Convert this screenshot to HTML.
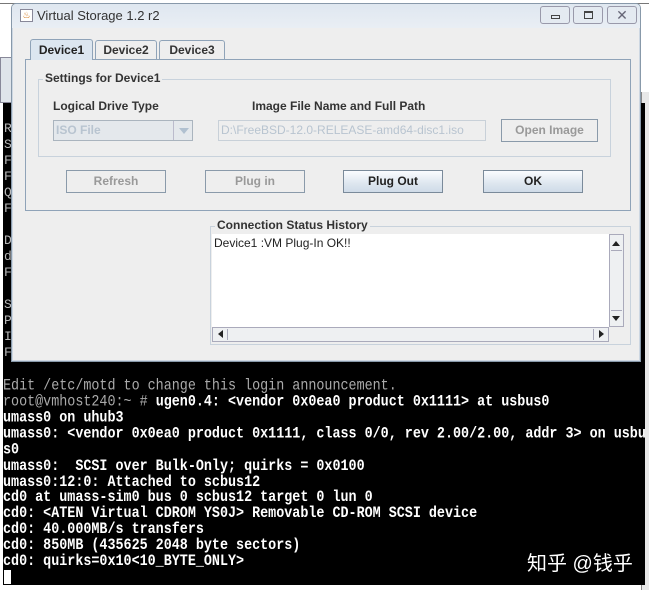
<!DOCTYPE html>
<html><head><meta charset="utf-8"><style>
*{margin:0;padding:0;box-sizing:border-box}
body{width:649px;height:590px;position:relative;overflow:hidden;background:#fff;font-family:"Liberation Sans",Arial,sans-serif;font-size:12px}
.a{position:absolute}
.term{background:#000;left:3px;top:103px;width:642px;height:482px}
.tl{position:absolute;left:3px;font-family:"Liberation Mono",monospace;font-size:13.4px;color:#fff;white-space:pre;line-height:16px;font-weight:bold;transform:scaleY(1.15);transform-origin:0 0}
.g{color:#aaa;font-weight:normal}
.lc{position:absolute;left:4px;font-family:"Liberation Mono",monospace;font-size:13px;color:#bbb;line-height:16px}
.btn{position:absolute;border:1px solid #8a9aaa;background:#eee;color:#999;font-weight:bold;text-align:center;line-height:21px;font-size:12px}
.act{background:linear-gradient(#fafcff,#dde6ef 60%,#cfdbe8);color:#222;border-color:#7a8a9a}
.grp{position:absolute;border:1px solid #c8d2dc}
.gt{position:absolute;background:#eeeeee;padding:0 2px;font-weight:bold;color:#333;font-size:12px}
</style></head><body>
<div class="a" style="left:0;top:0;width:649px;height:4px;background:#fff;border-bottom:1px solid #777"></div>
<div class="a" style="left:0;top:57px;width:14px;height:46px;background:#dfe4ea;border:1px solid #889"></div>
<div class="a" style="left:641px;top:92px;width:8px;height:498px;background:#e8e8e8;border-left:1px solid #888"></div>
<div class="a term"></div>
<div class="lc" style="top:121px">R<br>S<br>F<br>F<br>Q<br>F<br><br>D<br>d<br>F<br><br>S<br>P<br>I<br>F</div>
<div style="position:absolute;left:0;top:0;width:645px;height:590px;overflow:hidden">
<div class="tl g" style="top:378px">Edit /etc/motd to change this login announcement.</div>
<div class="tl" style="top:395px;line-height:13.9px"><span class="g">root@vmhost240:~ # </span>ugen0.4: &lt;vendor 0x0ea0 product 0x1111&gt; at usbus0
umass0 on uhub3
umass0: &lt;vendor 0x0ea0 product 0x1111, class 0/0, rev 2.00/2.00, addr 3&gt; on usbu
s0
umass0:  SCSI over Bulk-Only; quirks = 0x0100
umass0:12:0: Attached to scbus12
cd0 at umass-sim0 bus 0 scbus12 target 0 lun 0
cd0: &lt;ATEN Virtual CDROM YS0J&gt; Removable CD-ROM SCSI device
cd0: 40.000MB/s transfers
cd0: 850MB (435625 2048 byte sectors)
cd0: quirks=0x10&lt;10_BYTE_ONLY&gt;</div>
</div>
<div class="a" style="left:4px;top:570px;width:7px;height:14px;background:#fff"></div>
<div class="a" style="left:527px;top:547px;color:#fff;font-size:20px;font-family:'Liberation Sans','Noto Sans CJK SC',sans-serif">知乎 @钱乎</div>

<div class="a" style="left:11px;top:3px;width:630px;height:359px;background:#eeeeee;border:1px solid #8899aa;border-radius:5px 5px 0 0;box-shadow:0 0 0 1px #cdd7e2 inset"></div>
<div class="a" style="left:12px;top:4px;width:628px;height:24px;background:linear-gradient(#dfe7f0,#e9eef4);border-radius:4px 4px 0 0"></div>
<div class="a" style="left:20px;top:9px;width:13px;height:13px;border:1px solid #889;background:#fff;font-size:9px;color:#c60;text-align:center;line-height:11px">♨</div>
<div class="a" style="left:37px;top:8px;font-size:13px;color:#333">Virtual Storage 1.2 r2</div>
<div class="a" style="left:540px;top:6px;width:30px;height:18px;border:1px solid #99a;border-radius:3px;background:#e4eaf1"><div class="a" style="left:10px;top:8px;width:9px;height:4px;border:1px solid #444"></div></div>
<div class="a" style="left:573px;top:6px;width:30px;height:18px;border:1px solid #99a;border-radius:3px;background:#e4eaf1"><div class="a" style="left:10px;top:4px;width:9px;height:8px;border:1px solid #444;border-top-width:2px"></div></div>
<div class="a" style="left:607px;top:6px;width:30px;height:18px;border:1px solid #99a;border-radius:3px;background:#e4eaf1;text-align:center;font-size:14px;line-height:16px;color:#667">✕</div>

<div class="a" style="left:25px;top:59px;width:606px;height:152px;border:1px solid #8fa3b8"></div>
<div class="a" style="left:30px;top:39px;width:63px;height:21px;background:#dce6f0;border:1px solid #8fa3b8;border-bottom:none;border-radius:3px 3px 0 0;font-weight:bold;text-align:center;line-height:20px;color:#222">Device1</div>
<div class="a" style="left:95px;top:40px;width:62px;height:19px;border:1px solid #8fa3b8;border-bottom:none;border-radius:3px 3px 0 0;text-align:center;line-height:19px;font-weight:bold;color:#333">Device2</div>
<div class="a" style="left:159px;top:40px;width:66px;height:19px;border:1px solid #8fa3b8;border-bottom:none;border-radius:3px 3px 0 0;text-align:center;line-height:19px;font-weight:bold;color:#333">Device3</div>

<div class="grp" style="left:38px;top:79px;width:573px;height:78px"></div>
<div class="gt" style="left:43px;top:71px">Settings for Device1</div>
<div class="a" style="left:53px;top:99px;font-weight:bold;color:#333">Logical Drive Type</div>
<div class="a" style="left:252px;top:99px;font-weight:bold;color:#333">Image File Name and Full Path</div>
<div class="a" style="left:53px;top:120px;width:140px;height:21px;border:1px solid #aab4be;background:#e4e8ec"><div class="a" style="left:0;top:0;width:120px;height:19px;border-right:1px solid #bbc;color:#b8c4d0;font-weight:bold;line-height:19px;padding-left:2px">ISO File</div><div class="a" style="left:125px;top:7px;width:0;height:0;border-left:5px solid transparent;border-right:5px solid transparent;border-top:6px solid #b0c0d0"></div></div>
<div class="a" style="left:218px;top:120px;width:268px;height:21px;border:1px solid #c8d0d8;background:#eeeeee;color:#b8c4d0;line-height:19px;padding-left:2px">D:\FreeBSD-12.0-RELEASE-amd64-disc1.iso</div>
<div class="btn" style="left:501px;top:119px;width:97px;height:23px">Open Image</div>

<div class="btn" style="left:66px;top:170px;width:100px;height:23px">Refresh</div>
<div class="btn" style="left:205px;top:170px;width:100px;height:23px">Plug in</div>
<div class="btn act" style="left:343px;top:170px;width:100px;height:23px">Plug Out</div>
<div class="btn act" style="left:483px;top:170px;width:100px;height:23px">OK</div>

<div class="grp" style="left:210px;top:226px;width:421px;height:119px"></div>
<div class="gt" style="left:215px;top:218px">Connection Status History</div>
<div class="a" style="left:212px;top:234px;width:397px;height:93px;background:#fff;color:#222;padding:2px 2px">Device1 :VM Plug-In OK!!</div>
<div class="a" style="left:609px;top:234px;width:15px;height:93px;background:#eef0f2;border:1px solid #aab"><div class="a" style="left:1px;top:1px;width:11px;height:15px;border-bottom:1px solid #aab"><div class="a" style="left:1px;top:5px;border-left:4px solid transparent;border-right:4px solid transparent;border-bottom:5px solid #222"></div></div><div class="a" style="left:1px;bottom:1px;width:11px;height:15px;border-top:1px solid #aab"><div class="a" style="left:1px;top:5px;border-left:4px solid transparent;border-right:4px solid transparent;border-top:5px solid #222"></div></div></div>
<div class="a" style="left:212px;top:327px;width:397px;height:15px;background:#eef0f2;border:1px solid #aab"><div class="a" style="left:1px;top:1px;width:14px;height:11px;border-right:1px solid #aab"><div class="a" style="left:4px;top:1px;border-top:4px solid transparent;border-bottom:4px solid transparent;border-right:5px solid #222"></div></div><div class="a" style="right:1px;top:1px;width:14px;height:11px;border-left:1px solid #aab"><div class="a" style="left:5px;top:1px;border-top:4px solid transparent;border-bottom:4px solid transparent;border-left:5px solid #222"></div></div></div>
</body></html>
